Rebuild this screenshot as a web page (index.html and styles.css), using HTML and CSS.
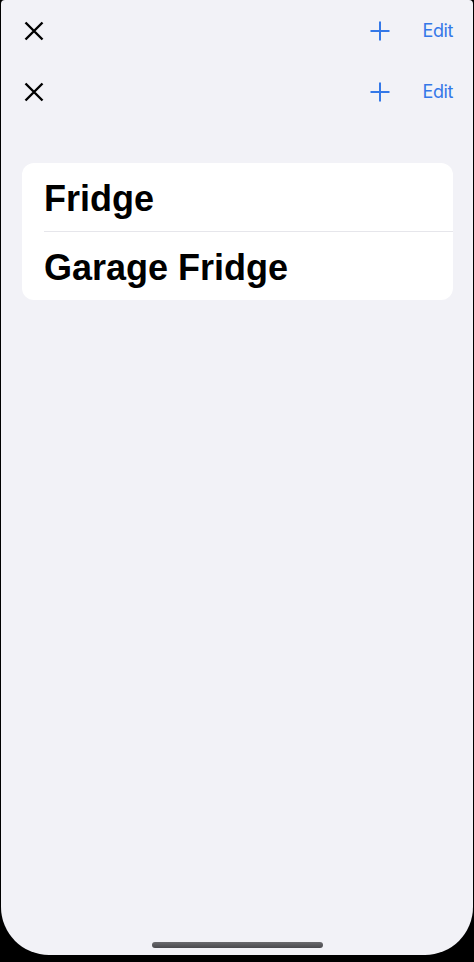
FILE: index.html
```html
<!DOCTYPE html>
<html lang="en">
<head>
<meta charset="utf-8">
<title>Fridges</title>
<link rel="stylesheet" href="styles.css">
</head>
<body>
<div class="screen">
  <div class="bar">
    <button class="icon-btn close" aria-label="Close">
      <svg viewBox="0 0 20 20" width="20" height="20"><path d="M1.5 1.5 L18.5 18.5 M18.5 1.5 L1.5 18.5" stroke="#000" stroke-width="2.4" fill="none"/></svg>
    </button>
    <div class="actions">
      <button class="icon-btn plus" aria-label="Add">
        <svg viewBox="0 0 20 20" width="20" height="20"><path d="M10 0.5 V19.5 M0.5 10 H19.5" stroke="currentColor" stroke-width="2" fill="none"/></svg>
      </button>
      <button class="text-btn">Edit</button>
    </div>
  </div>
  <div class="bar">
    <button class="icon-btn close" aria-label="Close">
      <svg viewBox="0 0 20 20" width="20" height="20"><path d="M1.5 1.5 L18.5 18.5 M18.5 1.5 L1.5 18.5" stroke="#000" stroke-width="2.4" fill="none"/></svg>
    </button>
    <div class="actions">
      <button class="icon-btn plus" aria-label="Add">
        <svg viewBox="0 0 20 20" width="20" height="20"><path d="M10 0.5 V19.5 M0.5 10 H19.5" stroke="currentColor" stroke-width="2" fill="none"/></svg>
      </button>
      <button class="text-btn">Edit</button>
    </div>
  </div>
  <ul class="list">
    <li class="row">Fridge</li>
    <li class="row">Garage Fridge</li>
  </ul>
  <div class="home-indicator"></div>
</div>
</body>
</html>
```
FILE: styles.css
```css
html, body {
  margin: 0;
  padding: 0;
  background: #000;
  height: 962px;
  overflow: hidden;
}
.screen {
  position: relative;
  height: 955px;
  margin: 0 1px;
  background: #f2f2f7;
  border-radius: 4px 4px 48px 48px;
  overflow: hidden;
  font-family: Inter, "Liberation Sans", sans-serif;
}
.bar {
  height: 61px;
  display: flex;
  align-items: center;
  justify-content: space-between;
  padding: 0 20px 0 23px;
}
.icon-btn {
  border: 0;
  background: none;
  padding: 0;
  width: 20px;
  height: 20px;
  display: flex;
}
.plus {
  color: #3478e8;
}
.actions {
  display: flex;
  align-items: center;
  gap: 33px;
}
.text-btn {
  border: 0;
  background: none;
  padding: 0;
  font-family: Inter, "Liberation Sans", sans-serif;
  font-size: 18px;
  letter-spacing: -0.4px;
  color: #3478e8;
}
.list {
  list-style: none;
  margin: 41px 20px 0 21px;
  padding: 0;
  background: #fff;
  border-radius: 12px;
  overflow: hidden;
}
.row {
  box-sizing: border-box;
  height: 68px;
  padding-top: 3px;
  display: flex;
  align-items: center;
  margin-left: 22px;
  font-family: "Liberation Sans", Arial, sans-serif;
  font-size: 36px;
  font-weight: 700;
  color: #000;
}
.row + .row {
  height: 69px;
  border-top: 1px solid #e6e6eb;
}
.home-indicator {
  position: absolute;
  left: 151px;
  bottom: 7px;
  width: 171px;
  height: 6px;
  border-radius: 3px;
  background: linear-gradient(#6a6a6e, #4a4a4e);
}
```
